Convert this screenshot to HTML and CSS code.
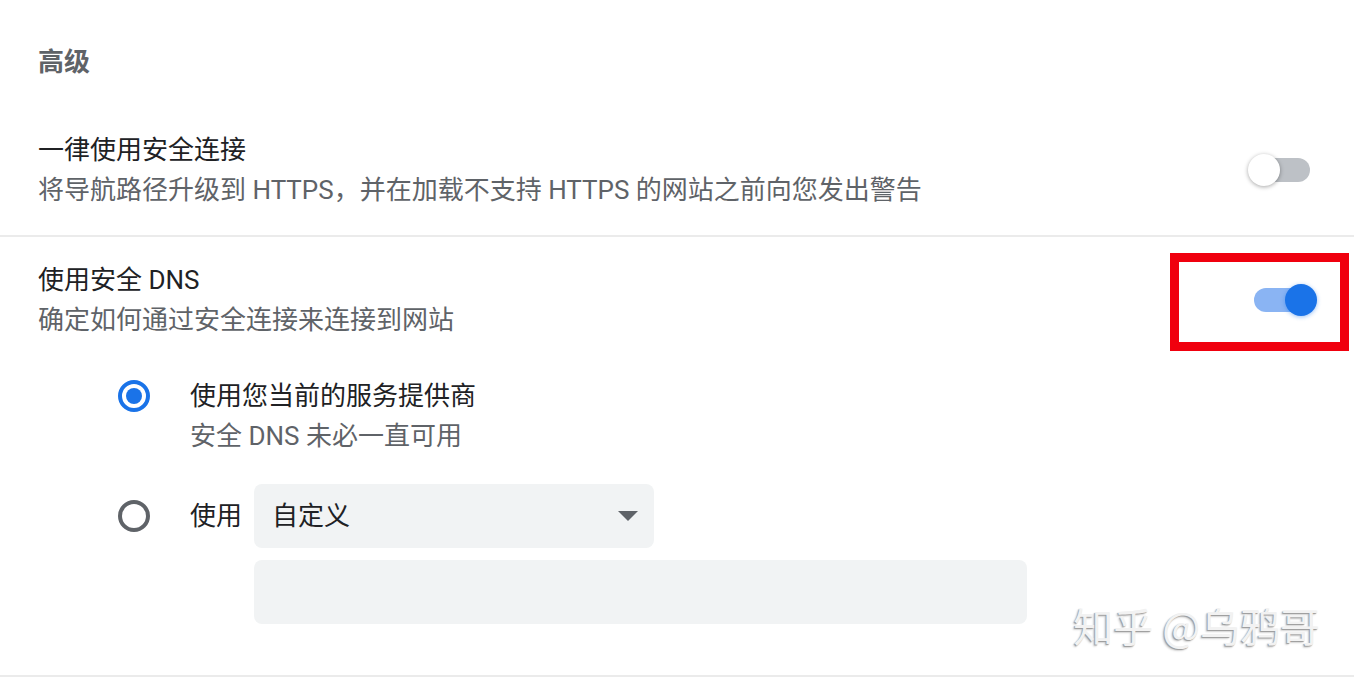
FILE: index.html
```html
<!DOCTYPE html>
<html lang="zh-CN">
<head>
<meta charset="utf-8">
<title>高级</title>
<link rel="stylesheet" href="styles.css">
</head>
<body>
<main class="page">
  <h2 class="section-title">高级</h2>

  <section class="setting setting-first">
    <div class="setting-head">
      <div class="setting-text">
        <div class="label">一律使用安全连接</div>
        <div class="sublabel">将导航路径升级到 HTTPS，并在加载不支持 HTTPS 的网站之前向您发出警告</div>
      </div>
      <div class="toggle"><span class="track"></span><span class="knob"></span></div>
    </div>
  </section>

  <section class="setting setting-dns">
    <div class="setting-head">
      <div class="setting-text">
        <div class="label">使用安全 DNS</div>
        <div class="sublabel">确定如何通过安全连接来连接到网站</div>
      </div>
      <div class="toggle toggle-on"><span class="track"></span><span class="knob"></span></div>
      <div class="highlight"></div>
    </div>

    <div class="radio-group">
      <div class="radio-row radio-row-first">
        <span class="radio radio-checked"><span class="dot"></span></span>
        <div class="radio-text">
          <div class="label">使用您当前的服务提供商</div>
          <div class="sublabel">安全 DNS 未必一直可用</div>
        </div>
      </div>
      <div class="radio-row radio-row-custom">
        <span class="radio"></span>
        <div class="custom">
          <div class="custom-line">
            <span class="label">使用</span>
            <div class="select"><span>自定义</span><span class="arrow"></span></div>
          </div>
          <div class="input"></div>
        </div>
      </div>
    </div>
  </section>

  <div class="watermark">知乎 @乌鸦哥</div>
</main>
</body>
</html>
```

FILE: styles.css
```css
html, body {
  margin: 0;
  padding: 0;
  background: #ffffff;
}

body {
  font-family: Roboto, "Noto Sans CJK SC", sans-serif;
  font-size: 26px;
  line-height: 40px;
  color: #202124;
  width: 1354px;
  height: 682px;
  overflow: hidden;
}

.page {
  position: relative;
  height: 682px;
}

.section-title {
  margin: 0;
  padding: 42px 0 0 38px;
  font-size: 26px;
  line-height: 40px;
  font-weight: 600;
  color: #5f6368;
}

.setting {
  padding-left: 38px;
  padding-right: 44px;
}

.setting-first {
  padding-top: 48px;
  padding-bottom: 25px;
  border-bottom: 2px solid #ebebeb;
}

.setting-dns {
  padding-top: 23px;
  padding-bottom: 51px;
  border-bottom: 2px solid #ebebeb;
}

.setting-head {
  position: relative;
  display: flex;
  align-items: center;
  justify-content: space-between;
}

.label {
  color: #202124;
}

.sublabel {
  color: #5f6368;
}

.toggle {
  position: relative;
  width: 56px;
  height: 24px;
  flex: none;
}

.track {
  display: block;
  width: 56px;
  height: 24px;
  border-radius: 12px;
  background: #bdc1c6;
}

.knob {
  position: absolute;
  top: -4px;
  left: -6px;
  width: 32px;
  height: 32px;
  border-radius: 50%;
  background: #ffffff;
  box-shadow: 0 1px 4px rgba(0, 0, 0, 0.35);
}

.toggle-on .track {
  background: #8ab4f3;
}

.toggle-on .knob {
  left: 31px;
  background: #1a73e8;
  box-shadow: 0 1px 4px rgba(26, 115, 232, 0.45);
}

.highlight {
  position: absolute;
  right: -39px;
  top: -7px;
  width: 161px;
  height: 80px;
  border: 9px solid #f0000e;
}

.radio-group {
  padding-left: 80px;
  display: flex;
  flex-direction: column;
}

.radio-row {
  display: flex;
  gap: 40px;
}

.radio-row-first {
  padding-top: 36px;
  align-items: flex-start;
}

.radio-row-first .radio {
  margin-top: 4px;
}

.radio-row-custom {
  padding-top: 28px;
  align-items: flex-start;
}

.radio-row-custom .radio {
  margin-top: 16px;
}

.radio {
  box-sizing: border-box;
  flex: none;
  width: 32px;
  height: 32px;
  border: 4px solid #5f6368;
  border-radius: 50%;
  display: flex;
  align-items: center;
  justify-content: center;
}

.radio-checked {
  border-color: #1a73e8;
}

.dot {
  width: 16px;
  height: 16px;
  border-radius: 50%;
  background: #1a73e8;
}

.custom {
  display: flex;
  flex-direction: column;
  gap: 12px;
}

.custom-line {
  display: flex;
  align-items: center;
  gap: 12px;
}

.select {
  box-sizing: border-box;
  width: 400px;
  height: 64px;
  border-radius: 8px;
  background: #f1f3f4;
  padding: 0 16px 0 18px;
  display: flex;
  align-items: center;
  justify-content: space-between;
  color: #202124;
}

.arrow {
  width: 0;
  height: 0;
  border-left: 10px solid transparent;
  border-right: 10px solid transparent;
  border-top: 10px solid #5f6368;
}

.input {
  margin-left: 64px;
  width: 773px;
  height: 64px;
  border-radius: 8px;
  background: #f1f3f4;
}

.watermark {
  position: absolute;
  right: 34px;
  top: 597px;
  font-family: "Noto Sans CJK SC", sans-serif;
  font-size: 40px;
  line-height: 56px;
  color: #f2f2f2;
  text-shadow: -1px 1px 1px #9a9a9a, -2px 2px 2px rgba(0, 0, 0, 0.15);
}
```
